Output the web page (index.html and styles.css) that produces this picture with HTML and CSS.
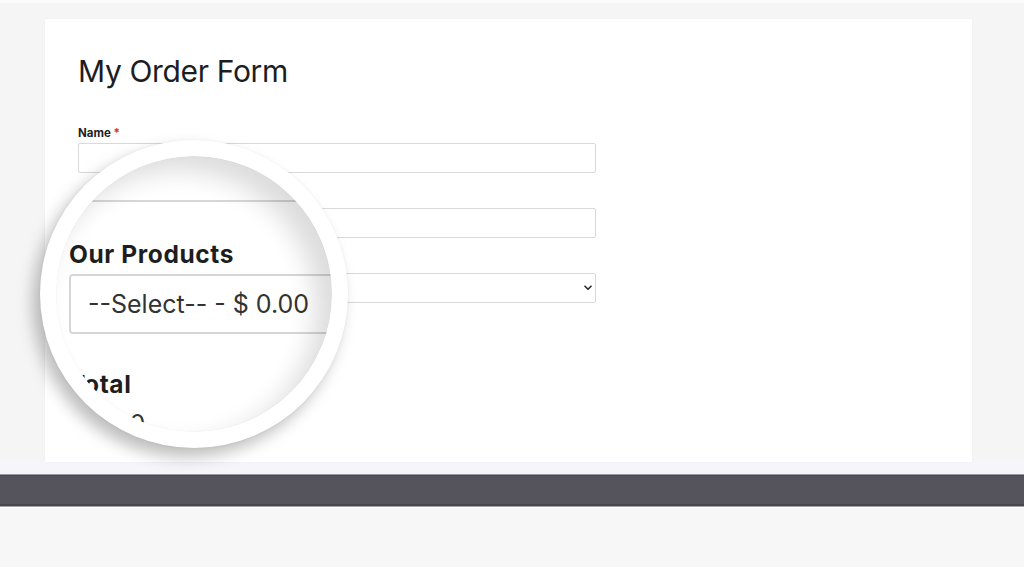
FILE: index.html
```html
<!DOCTYPE html>
<html lang="en">
<head>
<meta charset="utf-8">
<title>My Order Form</title>
<link rel="stylesheet" href="styles.css">
</head>
<body>
<div class="topstrip"></div>
<main class="stage">
  <section class="card">
    <h1 class="title">My Order Form</h1>
    <form class="form">
      <div class="field">
        <label class="label">Name <span class="req">*</span></label>
        <div class="input"></div>
      </div>
      <div class="field">
        <label class="label">Email <span class="req">*</span></label>
        <div class="input"></div>
      </div>
      <div class="field">
        <label class="label">Our Products</label>
        <div class="input select">
          <span class="select-text">--Select-- - $ 0.00</span>
          <svg class="chev" width="8" height="6" viewBox="0 0 8 6"><path d="M1 1.2 L4 4.2 L7 1.2" fill="none" stroke="#2a2a2a" stroke-width="1.6" stroke-linecap="round" stroke-linejoin="round"/></svg>
        </div>
      </div>
    </form>

    <div class="lens" aria-hidden="true">
      <div class="lens-inner">
        <div class="zoom">
          <div class="z-input"></div>
          <div class="z-label z-products">Our Products</div>
          <div class="z-input z-select"><span>--Select-- - $ 0.00</span></div>
          <div class="z-label z-total">Total</div>
          <div class="z-value">$ 0.00</div>
        </div>
      </div>
    </div>
  </section>
</main>
<div class="strip"></div>
<div class="bar"></div>
<div class="below"></div>
</body>
</html>
```

FILE: styles.css
```css
* { box-sizing: border-box; }

html, body {
  margin: 0;
  padding: 0;
}

body {
  background: #f6f6f6;
  font-family: Inter, "Noto Sans", "Liberation Sans", sans-serif;
  color: #1e1e1e;
  width: 1024px;
  height: 567px;
  overflow: hidden;
}

.topstrip {
  height: 3px;
  background: #fbfbfb;
}

.stage {
  background: #f5f5f5;
  padding: 16px 0 0 45px;
  height: 459px;
}

.card {
  position: relative;
  width: 927px;
  height: 443px;
  background: #ffffff;
  padding: 34px 0 0 33px;
  box-shadow: 0 0 2px rgba(0, 0, 0, 0.04);
}

.title {
  margin: 0;
  font-size: 30px;
  line-height: 36px;
  font-weight: 400;
  color: #1d1d1f;
  letter-spacing: -0.35px;
}

.form {
  margin-top: 37px;
  width: 518px;
}

.field {
  margin-bottom: 20px;
}

.label {
  display: block;
  font-size: 11.5px;
  line-height: 14px;
  font-weight: 700;
  color: #1e1e1e;
  margin-bottom: 3px;
}

.field + .field .label {
  margin-bottom: 1px;
}

.req {
  color: #d63638;
  font-weight: 700;
}

.input {
  height: 30px;
  border: 1px solid #d9d9db;
  border-radius: 2px;
  background: #fff;
}

.select {
  display: flex;
  align-items: center;
  justify-content: space-between;
  padding: 0 3px 0 9px;
  font-size: 12.5px;
  color: #333;
}

.chev {
  display: block;
}

/* Magnifier overlay */
.lens {
  position: absolute;
  left: -5px;
  top: 121px;
  width: 308px;
  height: 308px;
  border-radius: 50%;
  background: #ffffff;
  padding: 16px;
  box-shadow: -7px 9px 16px rgba(0, 0, 0, 0.26), 0 0 3px rgba(0, 0, 0, 0.06);
}

.lens-inner {
  position: relative;
  width: 276px;
  height: 276px;
  border-radius: 50%;
  overflow: hidden;
  background: #fff;
}

.lens-inner::after {
  content: "";
  position: absolute;
  inset: 0;
  border-radius: 50%;
  box-shadow: inset -16px 14px 26px rgba(0, 0, 0, 0.14), inset 0 0 1px rgba(0, 0, 0, 0.14);
  pointer-events: none;
}

.zoom {
  padding-left: 13px;
  margin-top: -14px;
  width: 1100px;
}

.z-input {
  height: 60px;
  width: 1036px;
  border: 2px solid #d6d6d8;
  border-radius: 4px;
  background: #fff;
}

.z-label {
  font-size: 24.5px;
  line-height: 28px;
  font-weight: 700;
  color: #1e1e1e;
  letter-spacing: 0.6px;
}

.z-products {
  margin-top: 38px;
  margin-bottom: 6px;
}

.z-select {
  display: flex;
  align-items: center;
  padding-left: 17px;
  font-size: 25px;
  color: #333;
  font-weight: 400;
}

.z-total {
  margin-top: 36px;
}

.z-value {
  margin-top: 11px;
  font-size: 25px;
  line-height: 30px;
  color: #333;
}

.strip {
  height: 12px;
  background: #f5f5fa;
}

.bar {
  height: 33px;
  background: #55545c;
  border-top: 1px solid #9c9ba0;
  border-bottom: 1px solid #a3a3a7;
  box-shadow: inset 0 1px 0 #48474e, inset 0 -2px 0 #48474e;
}

.below {
  height: 60px;
  background: #f7f7f7;
  border-top: 1px solid #ffffff;
}
```
